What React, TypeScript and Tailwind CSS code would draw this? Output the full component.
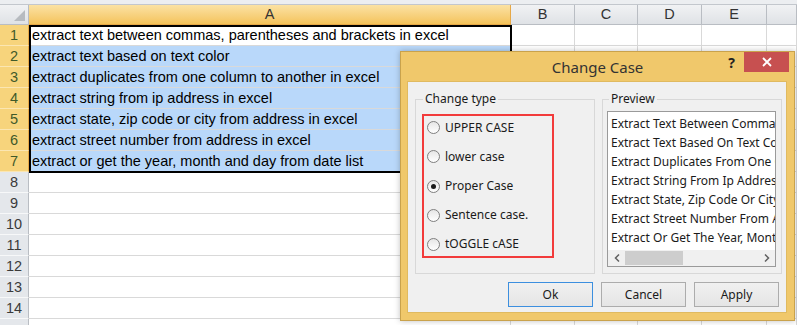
import React from 'react';

const sheetRows = [
  'extract text between commas, parentheses and brackets in excel',
  'extract text based on text color',
  'extract duplicates from one column to another in excel',
  'extract string from ip address in excel',
  'extract state, zip code or city from address in excel',
  'extract street number from address in excel',
  'extract or get the year, month and day from date list',
];

const otherCols = [
  { label: 'B', w: 'w-[64px]' },
  { label: 'C', w: 'w-[63px]' },
  { label: 'D', w: 'w-[64px]' },
  { label: 'E', w: 'w-[65px]' },
  { label: '', w: 'flex-1' },
];

const preview = [
  'Extract Text Between Commas, Parentheses And Brackets In Excel',
  'Extract Text Based On Text Color',
  'Extract Duplicates From One Column To Another In Excel',
  'Extract String From Ip Address In Excel',
  'Extract State, Zip Code Or City From Address In Excel',
  'Extract Street Number From Address In Excel',
  'Extract Or Get The Year, Month And Day From Date List',
];

const options = ['UPPER CASE', 'lower case', 'Proper Case', 'Sentence case.', 'tOGGLE cASE'];

function Radio({ checked }: { checked?: boolean }) {
  return (
    <span className="w-[13px] h-[13px] rounded-full border border-[#7f7f7f] bg-gradient-to-b from-[#e6e6e6] to-white flex items-center justify-center shrink-0">
      {checked && <span className="w-[5px] h-[5px] rounded-full bg-[#1a1a1a]" />}
    </span>
  );
}

function Button({ label, focused }: { label: string; focused?: boolean }) {
  return (
    <div
      className={
        'w-[85px] h-[25px] flex items-center justify-center border bg-gradient-to-b from-[#f0f0f0] to-[#e5e5e5] text-[12px] text-[#1a1a1a] ' +
        (focused ? 'border-[#3c8fdf]' : 'border-[#acacac]')
      }
    >
      {label}
    </div>
  );
}

function Dialog() {
  return (
    <div className="absolute left-[400px] top-[51px] w-[395px] h-[270px] bg-[#f0c86b] border border-[#c9a24c] flex flex-col shadow-[0_0_6px_rgba(0,0,0,0.25)] font-['Noto_Sans',sans-serif]">
      <div className="h-[29px] grid grid-cols-[1fr_auto_1fr] items-start">
        <div />
        <div className="pt-[5px] text-[15px] leading-[20px] text-[#333]">Change Case</div>
        <div className="flex justify-end items-start pr-[5px]">
          <span className="mt-[2px] mr-[9px] font-bold text-[14px] leading-[18px] text-[#222]">?</span>
          <div className="w-[45px] h-[20px] bg-[#c75050] flex items-center justify-center">
            <svg width="10" height="10" viewBox="0 0 10 10">
              <path d="M1 1 L9 9 M9 1 L1 9" stroke="#fff" strokeWidth="1.8" />
            </svg>
          </div>
        </div>
      </div>

      <div className="ml-[6px] mr-[7px] mb-[7px] flex-1 bg-[#f0f0f0] border border-[#e0ba60] flex flex-col">
        <div className="flex gap-[7px] ml-[7px] mt-[17px]">
          {/* Change type group */}
          <div className="relative w-[180px] h-[175px] border border-[#d8d8d8]">
            <span className="absolute -top-[9px] left-[7px] px-[2px] bg-[#f0f0f0] text-[12px] leading-[16px] text-[#1a1a1a]">
              Change type
            </span>
            <div className="ml-[6px] mt-[14px] w-[132px] h-[144px] border-2 border-[#f23b3b] flex flex-col gap-[6px] pl-[3px]">
              {options.map((o, i) => (
                <div key={o} className="h-[24px] flex items-center gap-[5px] text-[12px] text-[#1a1a1a]">
                  <Radio checked={i === 2} />
                  <span>{o}</span>
                </div>
              ))}
            </div>
          </div>

          {/* Preview group */}
          <div className="relative w-[180px] h-[175px] border border-[#d8d8d8]">
            <span className="absolute -top-[9px] left-[6px] px-[2px] bg-[#f0f0f0] text-[12px] leading-[16px] text-[#1a1a1a]">
              Preview
            </span>
            <div className="ml-[4px] mt-[11px] w-[169px] h-[156px] border border-[#9a9a9a] bg-white flex flex-col">
              <div className="flex-1 overflow-hidden pt-[2px] pl-[3px]">
                {preview.map((p) => (
                  <div key={p} className="h-[19px] leading-[19px] whitespace-nowrap text-[12px] text-[#1a1a1a]">
                    {p}
                  </div>
                ))}
              </div>
              <div className="h-[16px] bg-[#f0f0f0] flex items-center">
                <div className="w-[17px] flex justify-center">
                  <svg width="6" height="8" viewBox="0 0 6 8">
                    <path d="M5 0.5 L1.5 4 L5 7.5" stroke="#606060" strokeWidth="1.5" fill="none" />
                  </svg>
                </div>
                <div className="w-[58px] h-[14px] bg-[#cdcdcd]" />
                <div className="flex-1" />
                <div className="w-[17px] flex justify-center">
                  <svg width="6" height="8" viewBox="0 0 6 8">
                    <path d="M1 0.5 L4.5 4 L1 7.5" stroke="#606060" strokeWidth="1.5" fill="none" />
                  </svg>
                </div>
              </div>
            </div>
          </div>
        </div>

        <div className="flex justify-end gap-[8px] mt-[8px] mr-[7px]">
          <Button label="Ok" focused />
          <Button label="Cancel" />
          <Button label="Apply" />
        </div>
      </div>
    </div>
  );
}

export default function App() {
  const rowNums = Array.from({ length: 15 }, (_, i) => i + 1);
  return (
    <div className="relative w-[797px] h-[325px] overflow-hidden bg-white font-['Liberation_Sans',Arial,sans-serif]">
      <div className="h-[5px] bg-[#eceef1] border-b border-[#c3c7cd]" />
      {/* column headers */}
      <div className="flex h-[20px] text-[14.5px] text-[#333]">
        <div className="w-[29px] bg-gradient-to-b from-[#f1f2f4] to-[#dfe2e6] border-r border-b border-[#b9bdc3] flex items-end justify-end p-[3px]">
          <svg width="11" height="11" viewBox="0 0 11 11">
            <path d="M11 0 L11 11 L0 11 Z" fill="#b7bbc0" />
          </svg>
        </div>
        <div className="w-[482px] bg-gradient-to-b from-[#fbe2a3] to-[#f4c35a] border-r border-b border-[#e6a847] flex items-center justify-center pt-[1px]">
          A
        </div>
        {otherCols.map((c) => (
          <div
            key={c.label || 'f'}
            className={c.w + ' bg-gradient-to-b from-[#f1f2f4] to-[#dfe2e6] border-r border-b border-[#b9bdc3] flex items-center justify-center pt-[1px]'}
          >
            {c.label}
          </div>
        ))}
      </div>
      {/* rows */}
      {rowNums.map((n) => {
        const sel = n <= 7;
        return (
          <div key={n} className="flex h-[21px] text-[14.5px]">
            <div
              className={
                'w-[29px] border-r border-b flex items-center justify-center pt-[2px] ' +
                (sel
                  ? 'bg-[#f7d47c] border-r-[#e6a847] border-b-[#fbe6b2] text-[#3f5a2a]'
                  : 'bg-[#e4e7eb] border-r-[#b9bdc3] border-b-[#f7f8f9] text-[#3a3a3a]')
              }
            >
              {n <= 14 ? n : ''}
            </div>
            <div
              className={
                'w-[482px] border-r border-b border-[#d9d9d9] pl-[3px] pt-[2px] flex items-center whitespace-nowrap text-black ' +
                (n === 1 ? 'bg-white' : sel ? 'bg-[#b9d8fa]' : 'bg-white')
              }
            >
              {sel ? sheetRows[n - 1] : ''}
            </div>
            {otherCols.map((c) => (
              <div key={c.label || 'f'} className={c.w + ' border-r border-b border-[#d9d9d9]'} />
            ))}
          </div>
        );
      })}
      {/* selection frame */}
      <div className="absolute left-[29px] top-[25px] w-[483px] h-[148px] border-2 border-black pointer-events-none" />
      <Dialog />
    </div>
  );
}
